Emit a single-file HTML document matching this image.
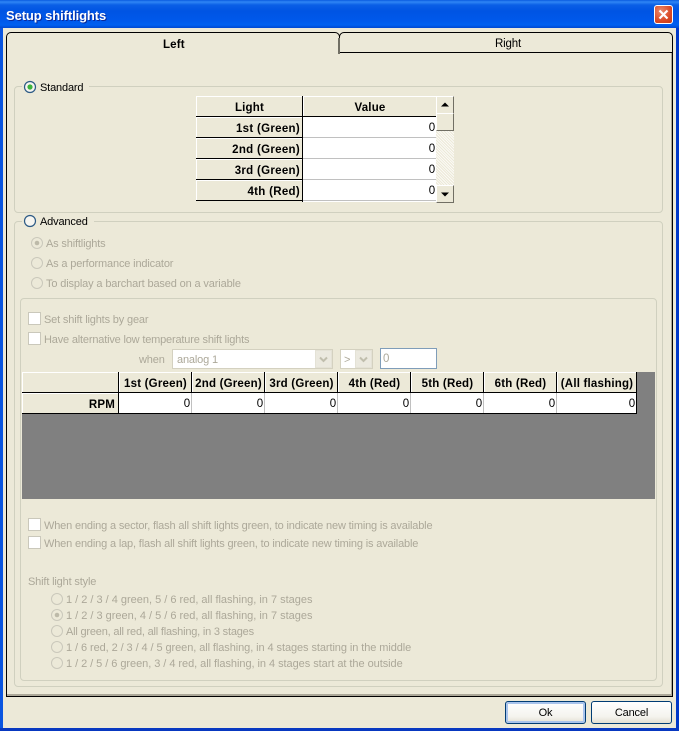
<!DOCTYPE html>
<html><head><meta charset="utf-8"><title>Setup shiftlights</title>
<style>
html,body{margin:0;padding:0;background:#ece9d8;}
#w{position:relative;width:679px;height:731px;overflow:hidden;background:#ece9d8;font-family:"Liberation Sans",sans-serif;font-size:11px;letter-spacing:-.16px;color:#000;}
#w div,#w span.t,#w svg{position:absolute;}
.t{position:absolute;white-space:nowrap;line-height:14px;}
.d{color:#aca899;}
.b{font-weight:bold;font-size:11.5px;letter-spacing:.15px;}
.g{border:1px solid #d0d0bf;border-radius:4px;box-sizing:border-box;}
.hd{background:#ece9d8;box-sizing:border-box;border-top:1px solid #fff;border-left:1px solid #fff;text-align:center;font-weight:bold;font-size:11.5px;line-height:22px;white-space:nowrap;letter-spacing:.2px;}
.hr{text-align:right;padding-right:2px;letter-spacing:.3px;}
.c{background:#fff;box-sizing:border-box;text-align:right;padding-right:1px;line-height:22px;font-size:11.5px;}
.cb{width:13px;height:13px;background:#fff;border:1px solid #cac8bb;box-sizing:border-box;}
.btn{box-sizing:border-box;border:1px solid #003c74;border-radius:3px;background:linear-gradient(#fff,#f4f3ee 70%,#e3dfd2);text-align:center;line-height:23px;}
.sb{box-sizing:border-box;background:#ece9d8;border-top:1px solid #fff;border-left:1px solid #fff;border-right:1px solid #716f64;border-bottom:1px solid #716f64;}
</style></head><body><div id="w">
<!-- frame -->
<div style="left:0;top:0;width:679px;height:28px;background:linear-gradient(#0a5be0 0,#2f86f5 2px,#0a5fe6 5px,#0054e3 11px,#0058ea 20px,#0060f0 25px,#0048d0 28px);"></div>
<div style="left:0;top:28px;width:3px;height:703px;background:#0a55e0;"></div>
<div style="left:676px;top:28px;width:3px;height:703px;background:#0038c8;"></div>
<div style="left:0;top:728px;width:679px;height:3px;background:#0838c0;"></div>
<span class="t" style="left:6px;top:9px;color:#fff;font-weight:bold;font-size:13px;letter-spacing:-.1px;text-shadow:1px 1px 0 #0a2a9a;">Setup shiftlights</span>
<!-- close -->
<div style="left:654px;top:5px;width:19px;height:19px;box-sizing:border-box;border:1px solid #fff;border-radius:3px;background:radial-gradient(circle at 35% 30%,#ea8a6c,#da4a26 60%,#c43a18);"></div>
<svg style="left:654px;top:5px;" width="19" height="19"><path d="M5.5 5.5L13.5 13.5M13.5 5.5L5.5 13.5" stroke="#fff" stroke-width="2.2" fill="none"/></svg>
<!-- tab pane -->
<div style="left:6px;top:52px;width:667px;height:645px;box-sizing:border-box;border:1px solid #000;border-top:0;background:#ece9d8;"></div>
<div style="left:671px;top:53px;width:1px;height:643px;background:#aca899;"></div>
<div style="left:7px;top:694px;width:665px;height:2px;background:#aca899;"></div>
<!-- Right tab -->
<div style="left:339px;top:32px;width:334px;height:21px;box-sizing:border-box;border:1px solid #000;border-radius:5px 5px 0 0;background:#ece9d8;"></div>
<span class="t" style="left:495px;top:37px;font-size:11.5px;">Right</span>
<!-- Left tab -->
<div style="left:6px;top:32px;width:334px;height:21px;box-sizing:border-box;border:1px solid #000;border-bottom:0;border-radius:5px 5px 0 0;background:#ece9d8;"></div>
<div style="left:7px;top:52px;width:331px;height:2px;background:#ece9d8;"></div>
<div style="left:338px;top:38px;width:2px;height:16px;background:#716f64;"></div>
<span class="t b" style="left:163px;top:38px;">Left</span>

<!-- Standard group -->
<div class="g" style="left:14px;top:86px;width:649px;height:127px;"></div>
<div style="left:22px;top:80px;width:67px;height:14px;background:#ece9d8;"></div>
<svg style="left:23px;top:80px;" width="14" height="14"><circle cx="7" cy="7" r="5.5" fill="#f6f5f0" stroke="#2c5a85" stroke-width="1.2"/><circle cx="7" cy="7" r="2.6" fill="#3bb33b"/></svg>
<span class="t" style="left:40px;top:81px;">Standard</span>

<!-- Standard grid -->
<div style="left:196px;top:96px;width:240px;height:107px;background:#000;"></div>
<div class="hd" style="left:196px;top:96px;width:106px;height:20px;">Light</div>
<div class="hd" style="left:303px;top:96px;width:133px;height:20px;">Value</div>
<div class="hd hr" style="left:196px;top:117px;width:106px;height:20px;">1st (Green)</div>
<div class="hd hr" style="left:196px;top:138px;width:106px;height:20px;">2nd (Green)</div>
<div class="hd hr" style="left:196px;top:159px;width:106px;height:20px;">3rd (Green)</div>
<div class="hd hr" style="left:196px;top:180px;width:106px;height:20px;">4th (Red)</div>
<div style="left:196px;top:201px;width:106px;height:1px;background:#ece9d8;"></div>
<div style="left:303px;top:117px;width:133px;height:86px;background:#c0c0c0;"></div>
<div class="c" style="left:303px;top:117px;width:133px;height:20px;">0</div>
<div class="c" style="left:303px;top:138px;width:133px;height:20px;">0</div>
<div class="c" style="left:303px;top:159px;width:133px;height:20px;">0</div>
<div class="c" style="left:303px;top:180px;width:133px;height:20px;">0</div>
<div class="c" style="left:303px;top:201px;width:133px;height:1px;"></div>
<div style="left:196px;top:202px;width:107px;height:1px;background:#ece9d8;"></div>
<div style="left:303px;top:202px;width:133px;height:1px;background:#ece9d8;"></div>
<!-- scrollbar -->
<div style="left:436px;top:96px;width:18px;height:107px;background:#f4f2e8;background-image:repeating-linear-gradient(45deg,#ece9d8 0 1px,#fbfaf5 1px 2px);"></div>
<div class="sb" style="left:436px;top:96px;width:18px;height:18px;"></div>
<svg style="left:436px;top:96px;" width="18" height="18"><path d="M5 10.5H13L9 6.5Z" fill="#000"/></svg>
<div class="sb" style="left:436px;top:113px;width:18px;height:18px;"></div>
<div class="sb" style="left:436px;top:185px;width:18px;height:18px;"></div>
<svg style="left:436px;top:185px;" width="18" height="18"><path d="M5 7.5H13L9 11.5Z" fill="#000"/></svg>

<!-- Advanced group -->
<div class="g" style="left:14px;top:221px;width:649px;height:466px;"></div>
<div style="left:22px;top:214px;width:72px;height:14px;background:#ece9d8;"></div>
<svg style="left:23px;top:214px;" width="14" height="14"><circle cx="7" cy="7" r="5.5" fill="#f6f5f0" stroke="#2c5a85" stroke-width="1.2"/></svg>
<span class="t" style="left:40px;top:215px;">Advanced</span>

<svg style="left:30px;top:236px;" width="14" height="14"><circle cx="7" cy="7" r="5.5" fill="#ece9d8" stroke="#cac8bb"/><circle cx="7" cy="7" r="2.3" fill="#bdbaa9"/></svg>
<span class="t d" style="left:46px;top:237px;">As shiftlights</span>
<svg style="left:30px;top:256px;" width="14" height="14"><circle cx="7" cy="7" r="5.5" fill="#ece9d8" stroke="#cac8bb"/></svg>
<span class="t d" style="left:46px;top:257px;">As a performance indicator</span>
<svg style="left:30px;top:276px;" width="14" height="14"><circle cx="7" cy="7" r="5.5" fill="#ece9d8" stroke="#cac8bb"/></svg>
<span class="t d" style="left:46px;top:277px;letter-spacing:-.14px;">To display a barchart based on a variable</span>

<!-- inner group -->
<div class="g" style="left:20px;top:298px;width:637px;height:383px;"></div>

<div class="cb" style="left:28px;top:312px;"></div>
<span class="t d" style="left:44px;top:313px;">Set shift lights by gear</span>
<div class="cb" style="left:28px;top:332px;"></div>
<span class="t d" style="left:44px;top:333px;letter-spacing:-.18px;">Have alternative low temperature shift lights</span>
<span class="t d" style="left:139px;top:353px;">when</span>
<!-- combos -->
<div style="left:172px;top:349px;width:161px;height:20px;box-sizing:border-box;border:1px solid #d4d1c0;background:#fff;"></div>
<span class="t d" style="left:177px;top:353px;">analog 1</span>
<div style="left:315px;top:350px;width:17px;height:18px;background:#ebe9df;border:1px solid #e4e2d6;box-sizing:border-box;"></div>
<svg style="left:315px;top:350px;" width="17" height="18"><path d="M5 7.5L8.5 11L12 7.5" stroke="#c0bead" stroke-width="2" fill="none"/></svg>
<div style="left:340px;top:349px;width:33px;height:20px;box-sizing:border-box;border:1px solid #d4d1c0;background:#fff;"></div>
<span class="t d" style="left:344px;top:353px;">&gt;</span>
<div style="left:355px;top:350px;width:17px;height:18px;background:#ebe9df;border:1px solid #e4e2d6;box-sizing:border-box;"></div>
<svg style="left:355px;top:350px;" width="17" height="18"><path d="M5 7.5L8.5 11L12 7.5" stroke="#c0bead" stroke-width="2" fill="none"/></svg>
<!-- text input -->
<div style="left:380px;top:348px;width:57px;height:21px;box-sizing:border-box;border:1px solid #7f9db9;background:#fff;"></div>
<span class="t d" style="left:383px;top:352px;font-size:11.5px;">0</span>

<!-- grid 2 -->
<div style="left:22px;top:372px;width:633px;height:127px;background:#808080;"></div>
<div style="left:22px;top:372px;width:615px;height:42px;background:#000;"></div>
<div class="hd" style="left:22px;top:372px;width:96px;height:20px;"></div>
<div class="hd" style="left:119px;top:372px;width:72px;height:20px;">1st (Green)</div>
<div class="hd" style="left:192px;top:372px;width:72px;height:20px;">2nd (Green)</div>
<div class="hd" style="left:265px;top:372px;width:72px;height:20px;">3rd (Green)</div>
<div class="hd" style="left:338px;top:372px;width:72px;height:20px;">4th (Red)</div>
<div class="hd" style="left:411px;top:372px;width:72px;height:20px;">5th (Red)</div>
<div class="hd" style="left:484px;top:372px;width:72px;height:20px;">6th (Red)</div>
<div class="hd" style="left:557px;top:372px;width:79px;height:20px;">(All flashing)</div>
<div class="hd" style="left:22px;top:393px;width:96px;height:20px;text-align:right;padding-right:3px;">RPM</div>
<div style="left:119px;top:393px;width:517px;height:20px;background:#c0c0c0;"></div>
<div class="c" style="left:119px;top:393px;width:72px;height:20px;">0</div>
<div class="c" style="left:192px;top:393px;width:72px;height:20px;">0</div>
<div class="c" style="left:265px;top:393px;width:72px;height:20px;">0</div>
<div class="c" style="left:338px;top:393px;width:72px;height:20px;">0</div>
<div class="c" style="left:411px;top:393px;width:72px;height:20px;">0</div>
<div class="c" style="left:484px;top:393px;width:72px;height:20px;">0</div>
<div class="c" style="left:557px;top:393px;width:79px;height:20px;">0</div>

<div class="cb" style="left:28px;top:518px;"></div>
<span class="t d" style="left:44px;top:519px;">When ending a sector, flash all shift lights green, to indicate new timing is available</span>
<div class="cb" style="left:28px;top:536px;"></div>
<span class="t d" style="left:44px;top:537px;">When ending a lap, flash all shift lights green, to indicate new timing is available</span>

<span class="t d" style="left:28px;top:575px;">Shift light style</span>
<svg style="left:50px;top:592px;" width="14" height="14"><circle cx="7" cy="7" r="5.5" fill="#ece9d8" stroke="#cac8bb"/></svg>
<span class="t d" style="left:66px;top:593px;letter-spacing:-.01px;">1 / 2 / 3 / 4 green, 5 / 6 red, all flashing, in 7 stages</span>
<svg style="left:50px;top:608px;" width="14" height="14"><circle cx="7" cy="7" r="5.5" fill="#ece9d8" stroke="#cac8bb"/><circle cx="7" cy="7" r="2.3" fill="#bdbaa9"/></svg>
<span class="t d" style="left:66px;top:609px;letter-spacing:-.01px;">1 / 2 / 3 green, 4 / 5 / 6 red, all flashing, in 7 stages</span>
<svg style="left:50px;top:624px;" width="14" height="14"><circle cx="7" cy="7" r="5.5" fill="#ece9d8" stroke="#cac8bb"/></svg>
<span class="t d" style="left:66px;top:625px;letter-spacing:-.2px;">All green, all red, all flashing, in 3 stages</span>
<svg style="left:50px;top:640px;" width="14" height="14"><circle cx="7" cy="7" r="5.5" fill="#ece9d8" stroke="#cac8bb"/></svg>
<span class="t d" style="left:66px;top:641px;letter-spacing:-.08px;">1 / 6 red, 2 / 3 / 4 / 5 green, all flashing, in 4 stages starting in the middle</span>
<svg style="left:50px;top:656px;" width="14" height="14"><circle cx="7" cy="7" r="5.5" fill="#ece9d8" stroke="#cac8bb"/></svg>
<span class="t d" style="left:66px;top:657px;letter-spacing:-.05px;">1 / 2 / 5 / 6 green, 3 / 4 red, all flashing, in 4 stages start at the outside</span>

<!-- buttons -->
<div class="btn" style="left:505px;top:701px;width:81px;height:23px;box-shadow:inset 0 0 0 2px #a9c4ec;">Ok</div>
<div class="btn" style="left:591px;top:701px;width:81px;height:23px;">Cancel</div>
</div></body></html>
